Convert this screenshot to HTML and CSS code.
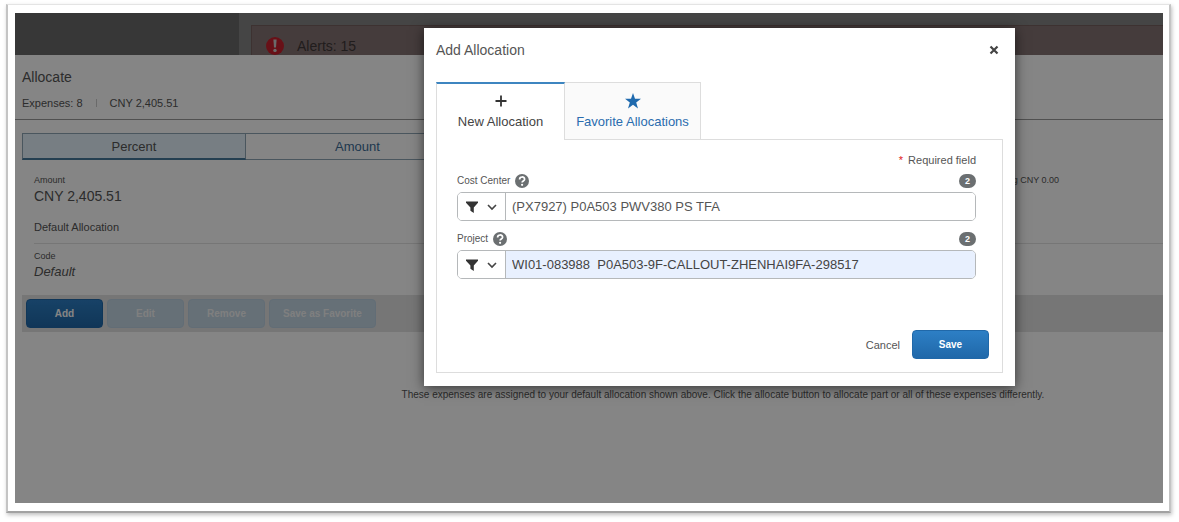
FILE: index.html
```html
<!DOCTYPE html>
<html lang="en">
<head>
    <meta charset="UTF-8">
    <meta name="viewport" content="width=device-width, initial-scale=1.0">
    <title>Add Allocation</title>
    <link rel="stylesheet" href="styles.css">
</head>
<body>

    <div class="frame">
        <div class="screen">
            <div class="page">

                <!-- Report page behind the allocate panel -->
                <div class="report-header">
                    <div class="report-side"></div>
                    <div class="alerts">
                        <svg class="alert-icon" viewBox="0 0 18 18">
                            <circle cx="9" cy="9" r="9" fill="#c8202c"/>
                            <path d="M7.4 2.6h3.2l-.6 7.8H8z" fill="#ccc"/>
                            <circle cx="9" cy="13.4" r="1.7" fill="#ccc"/>
                        </svg>
                        <span>Alerts: 15</span>
                    </div>
                </div>

                <!-- Allocate panel -->
                <div class="allocate-head">
                    <h1>Allocate</h1>
                    <p><span>Expenses: 8</span><span class="divider"></span><span>CNY 2,405.51</span></p>
                </div>

                <div class="allocate-body">
                    <div class="mode-tabs">
                        <button class="mode active" type="button">Percent</button>
                        <button class="mode" type="button">Amount</button>
                    </div>

                    <div class="summary">
                        <div class="totals">
                            <div>
                                <div class="small-label">Amount</div>
                                <div class="value">CNY 2,405.51</div>
                            </div>
                            <div class="small-label">Remaining CNY 0.00</div>
                        </div>
                        <h2>Default Allocation</h2>
                        <div class="small-label">Code</div>
                        <div class="code-value">Default</div>
                    </div>

                    <div class="toolbar">
                        <button class="btn" type="button">Add</button>
                        <button class="btn" type="button" disabled>Edit</button>
                        <button class="btn" type="button" disabled>Remove</button>
                        <button class="btn" type="button" disabled>Save as Favorite</button>
                    </div>

                    <p class="empty-text">These expenses are assigned to your default allocation shown above. Click the allocate button to allocate part or all of these expenses differently.</p>
                </div>

                <!-- Dialog -->
                <div class="overlay">
                    <div class="modal" role="dialog" aria-labelledby="modal-title">
                        <div class="modal-head">
                            <h2 id="modal-title">Add Allocation</h2>
                            <button class="close" type="button" aria-label="Close">
                                <svg viewBox="0 0 10 10"><path d="M1.5 1.5l7 7M8.5 1.5l-7 7" stroke="#444" stroke-width="2.2"/></svg>
                            </button>
                        </div>

                        <div class="tabs">
                            <button class="tab active" type="button">
                                <svg viewBox="0 0 16 16"><path d="M8 2.5v11M2.5 8h11" stroke="#333" stroke-width="1.8"/></svg>
                                New Allocation
                            </button>
                            <button class="tab" type="button">
                                <svg viewBox="0 0 16 16"><path d="M8 0l2 5.8h6l-4.8 3.6 1.8 6L8 11.8 3 15.4l1.8-6L0 5.8h6z" fill="#1f6aae"/></svg>
                                Favorite Allocations
                            </button>
                            <div class="tab-rest"></div>
                        </div>

                        <form class="panel">
                            <p class="required"><span>*</span> Required field</p>

                            <div class="field">
                                <div class="field-head">
                                    <label for="cost-center">Cost Center</label>
                                    <svg class="help" viewBox="0 0 14 14">
                                        <circle cx="7" cy="7" r="7" fill="#6b6f71"/>
                                        <path d="M4.6 5.4c0-3.2 5-3.2 5-.2 0 1.8-2.5 1.7-2.5 3.4" fill="none" stroke="#fff" stroke-width="1.7"/>
                                        <circle cx="7.1" cy="10.8" r="1.1" fill="#fff"/>
                                    </svg>
                                    <span class="count">2</span>
                                </div>
                                <div class="input-group">
                                    <button class="filter" type="button" aria-label="Filter cost centers">
                                        <svg class="funnel" viewBox="0 0 12 12"><path d="M0 .5h12v1.3L7.8 6.5V12L4.4 9.8V6.5L0 1.8z" fill="#333"/></svg>
                                        <svg class="chevron" viewBox="0 0 10 10"><path d="M1 3l4 4 4-4" fill="none" stroke="#444" stroke-width="1.6"/></svg>
                                    </button>
                                    <input id="cost-center" type="text" value="(PX7927) P0A503 PWV380 PS TFA">
                                </div>
                            </div>

                            <div class="field">
                                <div class="field-head">
                                    <label for="project">Project</label>
                                    <svg class="help" viewBox="0 0 14 14">
                                        <circle cx="7" cy="7" r="7" fill="#6b6f71"/>
                                        <path d="M4.6 5.4c0-3.2 5-3.2 5-.2 0 1.8-2.5 1.7-2.5 3.4" fill="none" stroke="#fff" stroke-width="1.7"/>
                                        <circle cx="7.1" cy="10.8" r="1.1" fill="#fff"/>
                                    </svg>
                                    <span class="count">2</span>
                                </div>
                                <div class="input-group filled">
                                    <button class="filter" type="button" aria-label="Filter projects">
                                        <svg class="funnel" viewBox="0 0 12 12"><path d="M0 .5h12v1.3L7.8 6.5V12L4.4 9.8V6.5L0 1.8z" fill="#333"/></svg>
                                        <svg class="chevron" viewBox="0 0 10 10"><path d="M1 3l4 4 4-4" fill="none" stroke="#444" stroke-width="1.6"/></svg>
                                    </button>
                                    <input id="project" type="text" value="WI01-083988  P0A503-9F-CALLOUT-ZHENHAI9FA-298517">
                                </div>
                            </div>

                            <div class="actions">
                                <button class="cancel" type="button">Cancel</button>
                                <button class="btn" type="button">Save</button>
                            </div>
                        </form>
                    </div>
                </div>
            </div>
        </div>
    </div>

</body>
</html>
```
FILE: styles.css
```css
* {
    box-sizing: border-box;
}

body {
    margin: 0;
    height: 100vh;
    padding: 4px 8px 9px 6px;
    display: flex;
    background: #fff;
    font-family: "Liberation Sans", Arial, sans-serif;
    font-size: 11px;
    line-height: 16px;
    color: #555;
}

h1, h2, p {
    margin: 0;
    font-weight: normal;
}

button, input {
    font-family: inherit;
    font-size: inherit;
    margin: 0;
}

svg {
    display: block;
    flex: none;
}

.frame {
    flex: 1;
    min-width: 0;
    display: flex;
    padding: 8px 6px 8px 7px;
    background: #fff;
    border: 2px solid #c4c4c4;
    border-top: 1px solid #e4e4e4;
    border-bottom-color: #a2a2a2;
    box-shadow: 1px 2px 4px rgba(0, 0, 0, 0.25);
}

.screen {
    flex: 1;
    min-width: 0;
    overflow: hidden;
    background: #fff;
}

/* The page runs on past the right edge of the screen */
.page {
    position: relative;
    width: calc(100% + 261px);
    min-height: 100%;
}

/* Report header */
.report-header {
    display: flex;
    height: 42px;
    padding-top: 12px;
    background: linear-gradient(90deg, #6a6a6a 224px, #848484 224px);
}

.report-side {
    width: 236px;
}

.alerts {
    flex: 1;
    display: flex;
    align-items: center;
    gap: 13px;
    padding: 11px 0 0 14px;
    font-size: 14px;
    color: #403838;
    background: #857474;
    border: 1px solid #76605f;
    border-bottom: 0;
}

.alert-icon {
    width: 18px;
    height: 18px;
}

/* Allocate panel */
.allocate-head {
    padding: 14px 7px 8px;
    border-bottom: 1px solid #999;
}

.allocate-head h1 {
    font-size: 14px;
    margin-bottom: 10px;
}

.allocate-head p {
    display: flex;
    align-items: center;
}

.divider {
    width: 1px;
    height: 8px;
    margin: 0 13px;
    background: #ccc;
}

.allocate-body {
    padding: 13px 0 0 7px;
}

.mode-tabs {
    display: flex;
}

.mode {
    width: 224px;
    height: 27px;
    padding: 0;
    font-size: 13px;
    color: #3c6c97;
    background: #fff;
    border: 1px solid #8fa5b5;
    border-left: 0;
}

.mode.active {
    color: #555;
    background: #e4f2fb;
    border-left: 1px solid #8fa5b5;
    border-bottom: 2px solid #45799c;
}

.summary {
    padding: 12px 0 15px 12px;
}

.totals {
    display: flex;
    justify-content: space-between;
    padding-right: 365px;
    margin-bottom: 15px;
}

.small-label {
    font-size: 9px;
}

.value {
    font-size: 14px;
}

.summary h2 {
    font-size: 11px;
    padding-bottom: 8px;
    margin-bottom: 4px;
    border-bottom: 1px solid #e2e2e2;
}

.code-value {
    font-size: 13px;
    font-style: italic;
}

.toolbar {
    display: flex;
    gap: 4px;
    padding: 4px;
    background: #e2e2e2;
}

.btn {
    min-width: 77px;
    height: 29px;
    padding: 0 13px;
    font-size: 10px;
    font-weight: bold;
    color: #fff;
    background: linear-gradient(#2d7fc5, #2068a9);
    border: 1px solid #2068a9;
    border-radius: 4px;
}

.btn:disabled {
    color: #f4f4f4;
    background: #c3d6e4;
    border-color: #bdd2e2;
}

.empty-text {
    padding-top: 55px;
    font-size: 10px;
    text-align: center;
}

/* Dialog */
.overlay {
    position: absolute;
    inset: 0;
    display: flex;
    justify-content: center;
    align-items: flex-start;
    padding-top: 15px;
    background: rgba(0, 0, 0, 0.48);
}

.modal {
    width: 591px;
    padding: 14px 12px 13px;
    background: #fff;
    box-shadow: 0 2px 12px rgba(0, 0, 0, 0.6);
}

.modal-head {
    display: flex;
    justify-content: space-between;
    align-items: center;
    margin-bottom: 24px;
}

.modal-head h2 {
    font-size: 14px;
}

.close {
    padding: 0 4px;
    background: none;
    border: 0;
}

.close svg {
    width: 10px;
    height: 10px;
}

.tabs {
    display: flex;
}

.tab {
    width: 136px;
    height: 58px;
    display: flex;
    flex-direction: column;
    align-items: center;
    gap: 5px;
    padding: 10px 0 0;
    font-size: 13px;
    line-height: 16px;
    white-space: nowrap;
    color: #2a6cae;
    background: #fafafa;
    border: 1px solid #ddd;
    border-left: 0;
}

.tab.active {
    width: 129px;
    padding-top: 9px;
    color: #444;
    background: #fff;
    border-left: 1px solid #ddd;
    border-top: 2px solid #3d85c0;
    border-bottom: 0;
}

.tab svg {
    width: 16px;
    height: 16px;
}

.tab-rest {
    flex: 1;
    border-bottom: 1px solid #ddd;
}

.panel {
    padding: 12px 13px 13px 20px;
    border: 1px solid #ddd;
    border-top: 0;
}

.required {
    margin-right: 13px;
    text-align: right;
}

.required span {
    color: #e02020;
    margin-right: 2px;
}

.field {
    margin: 5px 13px 0 0;
}

.field + .field {
    margin-top: 10px;
}

.field-head {
    display: flex;
    align-items: center;
    gap: 5px;
    margin-bottom: 3px;
    font-size: 10px;
}

.help {
    width: 14px;
    height: 14px;
}

.count {
    width: 17px;
    margin-left: auto;
    font-size: 9px;
    line-height: 14px;
    font-weight: bold;
    text-align: center;
    color: #fff;
    background: #6b6f71;
    border-radius: 7px;
}

.input-group {
    display: flex;
    height: 29px;
    overflow: hidden;
    border: 1px solid #b5b8ba;
    border-radius: 5px;
}

.filter {
    width: 48px;
    display: flex;
    align-items: center;
    justify-content: space-between;
    padding: 0 8px;
    background: #fff;
    border: 0;
    border-right: 1px solid #b5b8ba;
}

.funnel {
    width: 12px;
    height: 12px;
}

.chevron {
    width: 10px;
    height: 10px;
}

.input-group input {
    flex: 1;
    min-width: 0;
    padding: 0 6px 1px;
    font-size: 13px;
    color: #555;
    background: #fff;
    border: 0;
}

.filled input {
    background: #e8f0fe;
    color: #444;
}

.actions {
    display: flex;
    justify-content: flex-end;
    gap: 12px;
    margin-top: 51px;
}

.cancel {
    padding: 0;
    color: #555;
    background: none;
    border: 0;
}
```
